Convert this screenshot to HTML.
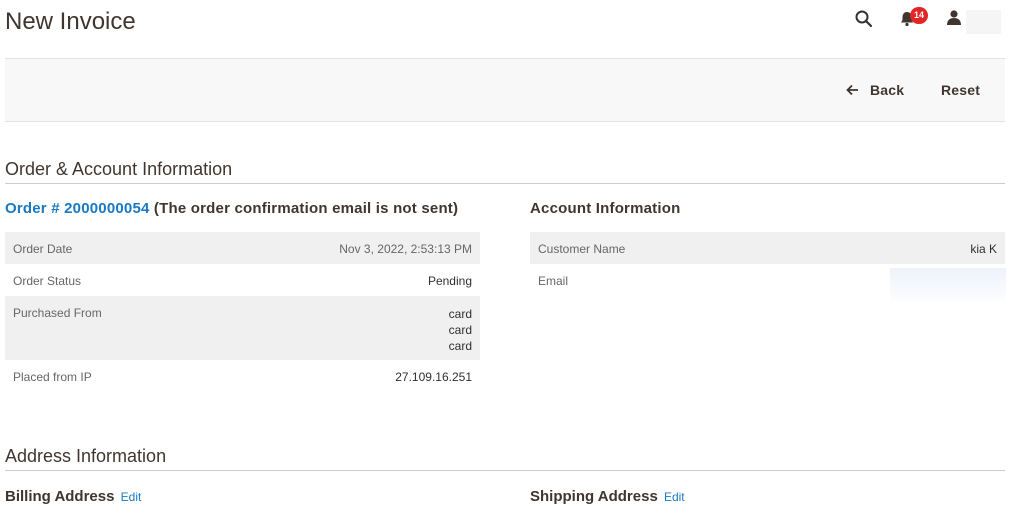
<!DOCTYPE html>
<html><head><meta charset="utf-8"><style>
*{margin:0;padding:0;box-sizing:border-box}
body{width:1024px;height:513px;overflow:hidden;background:#fff;font-family:"Liberation Sans",sans-serif;color:#303030;position:relative}
.a{position:absolute;white-space:nowrap}
.row{position:absolute;height:32px;font-size:12px;color:#666}
.row span{position:absolute;top:10px}
.g{background:#f0f0f0}
</style></head><body>
<div class="a" style="left:5px;top:8px;font-size:24px;color:#41362f">New Invoice</div>
<svg class="a" style="left:854px;top:9px" width="20" height="20" viewBox="0 0 20 20"><circle cx="8" cy="8" r="5.5" fill="none" stroke="#333" stroke-width="2"/><path d="M12 12l5 5" stroke="#333" stroke-width="2.2" stroke-linecap="round"/></svg>
<svg class="a" style="left:900px;top:11px" width="14" height="16" viewBox="0 0 14 16"><path d="M7 1c3 0 4.5 2.5 4.5 5v3l1.5 2.5H1l1.5-2.5V6C2.5 3.5 4 1 7 1z" fill="#41362f"/><circle cx="7" cy="13.5" r="1.6" fill="#41362f"/></svg>
<div class="a" style="left:910px;top:7px;width:18px;height:17px;border-radius:9px;background:#e22626;color:#fff;font-size:9px;font-weight:bold;text-align:center;line-height:17px">14</div>
<svg class="a" style="left:946px;top:10px" width="16" height="15" viewBox="0 0 16 15"><circle cx="8" cy="4" r="3.6" fill="#41362f"/><path d="M1 15c0-5 3-7 7-7s7 2 7 7z" fill="#41362f"/></svg>
<div class="a" style="left:966px;top:10px;width:35px;height:24px;background:#f5f5f5"></div>
<div class="a" style="left:5px;top:58px;width:1000px;height:64px;background:#f8f8f8;border-top:1px solid #e3e3e3;border-bottom:1px solid #e3e3e3"></div>
<svg class="a" style="left:846px;top:84px" width="13" height="12" viewBox="0 0 13 12"><path d="M12 6H2M6 1.5L1.5 6 6 10.5" fill="none" stroke="#41362f" stroke-width="1.8"/></svg>
<div class="a" style="left:870px;top:82px;font-size:14px;font-weight:bold;color:#41362f;letter-spacing:0.2px">Back</div>
<div class="a" style="left:941px;top:82px;font-size:14px;font-weight:bold;color:#41362f;letter-spacing:0.2px">Reset</div>
<div class="a" style="left:5px;top:159px;font-size:18px;color:#41362f">Order &amp; Account Information</div>
<div class="a" style="left:5px;top:183px;width:1000px;height:1px;background:#ccc"></div>
<div class="a" style="left:5px;top:200px;font-size:15px;font-weight:bold;color:#41362f;letter-spacing:0.2px"><span style="color:#1979c3">Order # 2000000054</span> (The order confirmation email is not sent)</div>
<div class="row g" style="left:5px;top:232px;width:475px"><span style="left:8px">Order Date</span><span style="right:8px">Nov 3, 2022, 2:53:13 PM</span></div>
<div class="row" style="left:5px;top:264px;width:475px"><span style="left:8px">Order Status</span><span style="right:8px;color:#303030">Pending</span></div>
<div class="row g" style="left:5px;top:296px;width:475px;height:64px"><span style="left:8px">Purchased From</span><span style="right:8px;text-align:right;line-height:16px;top:10px;color:#303030">card<br>card<br>card</span></div>
<div class="row" style="left:5px;top:360px;width:475px"><span style="left:8px">Placed from IP</span><span style="right:8px;color:#303030">27.109.16.251</span></div>
<div class="a" style="left:530px;top:200px;font-size:15px;font-weight:bold;color:#41362f;letter-spacing:0.2px">Account Information</div>
<div class="row g" style="left:530px;top:232px;width:475px"><span style="left:8px">Customer Name</span><span style="right:8px;color:#303030">kia K</span></div>
<div class="row" style="left:530px;top:264px;width:475px"><span style="left:8px">Email</span></div>
<div class="a" style="left:890px;top:268px;width:116px;height:36px;background:linear-gradient(#eef3fb,#f8fafd 70%,#fff)"></div>
<div class="a" style="left:5px;top:446px;font-size:18px;color:#41362f">Address Information</div>
<div class="a" style="left:5px;top:470px;width:1000px;height:1px;background:#ccc"></div>
<div class="a" style="left:5px;top:488px;font-size:15px;font-weight:bold;color:#41362f">Billing Address <span style="font-size:12px;font-weight:normal;color:#1979c3;margin-left:2px">Edit</span></div>
<div class="a" style="left:530px;top:488px;font-size:15px;font-weight:bold;color:#41362f">Shipping Address <span style="font-size:12px;font-weight:normal;color:#1979c3;margin-left:2px">Edit</span></div>
</body></html>
